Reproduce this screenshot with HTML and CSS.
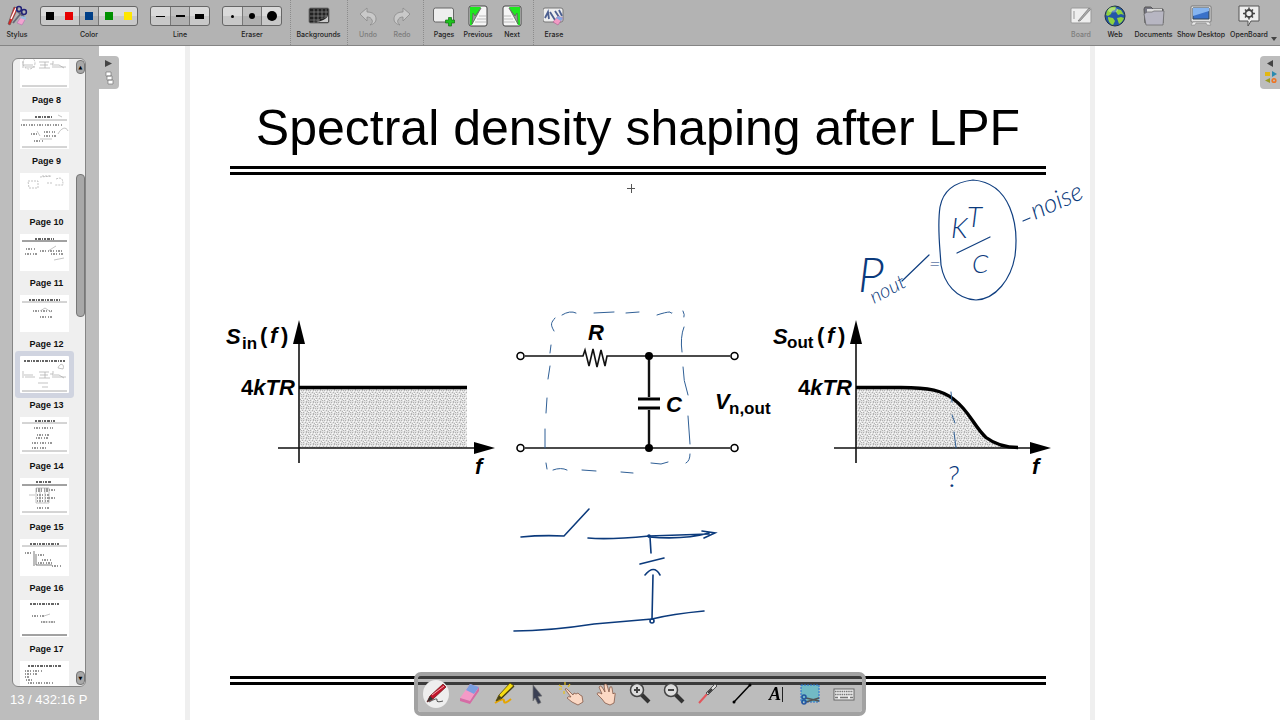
FILE: index.html
```
<!DOCTYPE html>
<html lang="en">
<head>
    <meta charset="UTF-8">
    <title>OpenBoard</title>
    <link rel="stylesheet" href="styles.css">
</head>
<body>

<header class="toolbar">
    <div class="group first">
        <button class="tool">
            <svg width="22" height="22" viewBox="0 0 22 22"><path d="M2 19L8 2l4 1-8 17z" fill="#d22" stroke="#555" stroke-width=".6"/><path d="M5 14L10 3" stroke="#fff" stroke-width="1.4"/><path d="M7 18L16 7M18 12L10 5" stroke="#667" stroke-width="1.8"/><circle cx="13" cy="4" r="2.400" fill="none" stroke="#227" stroke-width="1.500"/><circle cx="18" cy="7" r="2.400" fill="none" stroke="#227" stroke-width="1.500"/><path d="M11 18l4-6 5 1-4 7z" fill="#f2a3cf" stroke="#a6a" stroke-width=".5"/><path d="M14 13l2-2 4 1v3z" fill="#9bd"/></svg>
            <span>Stylus</span>
        </button>
    </div>
    <div class="field">
        <div class="segments colors">
            <button aria-label="Black"><i class="swatch black"></i></button>
            <button aria-label="Red"><i class="swatch red"></i></button>
            <button aria-label="Blue" class="on"><i class="swatch blue"></i></button>
            <button aria-label="Green"><i class="swatch green"></i></button>
            <button aria-label="Yellow"><i class="swatch yellow"></i></button>
        </div>
        <span>Color</span>
    </div>
    <div class="field">
        <div class="segments">
            <button aria-label="Fine line"><i class="line thin"></i></button>
            <button aria-label="Medium line" class="on"><i class="line medium"></i></button>
            <button aria-label="Strong line"><i class="line thick"></i></button>
        </div>
        <span>Line</span>
    </div>
    <div class="field last">
        <div class="segments">
            <button aria-label="Small eraser"><i class="dot small"></i></button>
            <button aria-label="Medium eraser" class="on"><i class="dot mid"></i></button>
            <button aria-label="Large eraser"><i class="dot large"></i></button>
        </div>
        <span>Eraser</span>
    </div>
    <div class="group">
        <button class="tool wide">
            <svg width="22" height="22" viewBox="0 0 22 22"><rect x="1" y="3" width="20" height="15" rx="1.500" fill="#222" stroke="#777"/><path d="M2 7h18M2 11h18M2 15h10M6 4v14M10 4v14M14 4v10M18 4v8" stroke="#888" stroke-width=".7"/><path d="M5 17c7 0 12-2 15-6v6z" fill="#ccc"/><path d="M5 17c5-1 7-2 8-4 2 1 5 0 7-2" fill="#666"/></svg>
            <span>Backgrounds</span>
        </button>
    </div>
    <div class="group">
        <button class="tool" disabled>
            <svg width="22" height="22" viewBox="0 0 22 22"><path d="M3 9l7-6v4c6 0 9 3 9 7 0 3-2 5-6 6 2-2 3-3 2-5-1-2-2-3-5-3v4z" fill="#c9c9c9" stroke="#8a8a8a" stroke-width=".8"/></svg>
            <span>Undo</span>
        </button>
        <button class="tool" disabled>
            <svg width="22" height="22" viewBox="0 0 22 22"><path d="M19 9l-7-6v4c-6 0-9 3-9 7 0 3 2 5 6 6-2-2-3-3-2-5 1-2 2-3 5-3v4z" fill="#c9c9c9" stroke="#8a8a8a" stroke-width=".8"/></svg>
            <span>Redo</span>
        </button>
    </div>
    <div class="group">
        <button class="tool">
            <svg width="22" height="22" viewBox="0 0 22 22"><rect x=".5" y="3" width="20" height="14" rx="2" fill="#eee" stroke="#666"/><path d="M15.500 12.500h3v2.500h3v3h-3v3h-3v-3h-3v-3h3z" fill="#1cc31c" stroke="#176b17" stroke-width=".7"/></svg>
            <span>Pages</span>
        </button>
        <button class="tool">
            <svg width="22" height="22" viewBox="0 0 22 22"><rect x="2" y="1" width="18" height="20" rx="2" fill="#f5f5f5" stroke="#444"/><path d="M3 2h11L5 20H3z" fill="#1ee81e"/><path d="M14 3L5 19 6 8l2 3z" fill="#999" stroke="#555" stroke-width=".6"/><path d="M12 11h7M10 14h9M8 17h11" stroke="#bbb"/></svg>
            <span>Previous</span>
        </button>
        <button class="tool">
            <svg width="22" height="22" viewBox="0 0 22 22"><rect x="2" y="1" width="18" height="20" rx="2" fill="#f5f5f5" stroke="#444"/><path d="M19 2H8l9 18h2z" fill="#1ee81e"/><path d="M8 3l9 16-1-11-2 3z" fill="#999" stroke="#555" stroke-width=".6"/><path d="M3 11h7M3 14h9M3 17h11" stroke="#bbb"/></svg>
            <span>Next</span>
        </button>
    </div>
    <div class="group">
        <button class="tool">
            <svg width="22" height="22" viewBox="0 0 22 22"><rect x="0" y="3" width="20" height="14" rx="2" fill="#eee" stroke="#777"/><path d="M2 13l3-6 1 7M7 7l5 8M12 6l4 6M16 5l3 6" stroke="#4c5f90" stroke-width="1.800" fill="none"/><path d="M10 17l5-6 5 2-5 7z" fill="#f29ac4" stroke="#a0568a" stroke-width=".5"/><path d="M13 13l2-2 5 2-2 3z" fill="#86a7e0"/></svg>
            <span>Erase</span>
        </button>
    </div>
    <nav class="group modes">
        <button class="tool" disabled>
            <svg width="22" height="22" viewBox="0 0 22 22"><rect x="1" y="3" width="20" height="15" rx="1" fill="#eee" stroke="#999"/><path d="M4 6v8" stroke="#999"/><path d="M8 16L19 3l1.500 1.500L10 16z" fill="#aaa" stroke="#777" stroke-width=".7"/></svg>
            <span>Board</span>
        </button>
        <button class="tool">
            <svg width="22" height="22" viewBox="0 0 22 22"><circle cx="11" cy="11" r="10" fill="#2456a8" stroke="#234"/><path d="M3 6c2-4 6-5 9-4l-1 3-3 1-1 3-3 2-2-1zM13 4l4 1 3 5-3-1-3 1-2-3zM4 12l5 1 2 3-2 4c-3-1-5-4-5-8zM13 13l4-1 3 1c-1 3-3 5-5 6l-1-3z" fill="#8fd13f"/><ellipse cx="9" cy="5" rx="5" ry="2.500" fill="#fff" opacity=".3"/></svg>
            <span>Web</span>
        </button>
        <button class="tool docs">
            <svg width="22" height="22" viewBox="0 0 22 22"><path d="M1 4l1-2h6l2 2h10v14H2z" fill="#777783" stroke="#555"/><path d="M4 4h15v6H4z" fill="#ddd"/><path d="M1 9l3-2h5l2-1h10l-1 14H3z" fill="#b7b6c2" stroke="#666" stroke-width=".7"/></svg>
            <span>Documents</span>
        </button>
        <button class="tool desk">
            <svg width="22" height="22" viewBox="0 0 22 22"><rect x="1" y="1" width="20" height="16" rx="1" fill="#e2e2e2" stroke="#666" stroke-width=".8"/><path d="M3 3h16v11H3z" fill="#3971c9" stroke="#345"/><path d="M3 3h16v3L3 11z" fill="#85b4ef"/><path d="M1 20l2-3h16l2 3h-4l-1-2H6l-1 2z" fill="#eee" stroke="#888" stroke-width=".6"/></svg>
            <span>Show Desktop</span>
        </button>
        <button class="tool menu">
            <svg width="22" height="22" viewBox="0 0 22 22"><path d="M1 1h20v15h-8l-3 5v-5H1z" fill="#eee" stroke="#555"/><circle cx="11" cy="8.500" r="3.500" fill="none" stroke="#444" stroke-width="1.800"/><path d="M11 2.500v3M11 11.500v3M5 8.500h3M14 8.500h3M7 4.500l2 2M13 10.500l2 2M15 4.500l-2 2M9 10.500l-2 2" stroke="#444" stroke-width="1.500"/></svg>
            <span>OpenBoard</span>
        </button>
        <i class="more"></i>
    </nav>
</header>

<main class="board">
    <aside class="sidebar">
        <div class="panel">
            <ol class="pages">
                <li><svg class="thumb" viewBox="0 0 49 37"><use href="#mini-circuit" y="-5"/><circle cx="9" cy="12" r="6" stroke-dasharray="2 1"/><path class="rule" d="M2 35h45"/></svg>Page 8</li>
                <li><svg class="thumb" viewBox="0 0 49 37"><path class="head" d="M15 5h17"/><path class="rule" d="M2 8h45M2 35h45"/><path class="text" d="M1 13h42M11 22h6M24 20h11M24 24h12M14 29h9"/><path d="M17 19l3 5M38 22c3-6 8-8 10-3M20 27h12M38 3l4 2"/></svg>Page 9</li>
                <li><svg class="thumb" viewBox="0 0 49 37"><path d="M8 8h10v7H9zM22 3h9M27 10h5M36 6c5-2 7-1 7 6h-8M20 4l12-1" stroke-dasharray="2 1"/></svg>Page 10</li>
                <li><svg class="thumb" viewBox="0 0 49 37"><path class="head" d="M15 5h19"/><path class="rule dark" d="M2 7h45"/><path class="text" d="M6 15h10M20 17h22M5 20h12M31 20h12"/><path d="M28 17l8-5M34 26l10-2"/></svg>Page 11</li>
                <li><svg class="thumb" viewBox="0 0 49 37"><path class="head" d="M9 5h31"/><path class="rule" d="M2 7h45"/><path class="text" d="M13 16h19M20 22h12"/><path d="M20 16l5-3 6 4"/></svg>Page 12</li>
                <li class="current"><svg class="thumb" viewBox="0 0 49 37"><path class="head" d="M4 5h41"/><use href="#mini-circuit"/><path d="M38 12c2-6 7-4 5 1zM18 27h10M22 31h6"/><path class="rule" d="M2 35h45"/></svg>Page 13</li>
                <li><svg class="thumb" viewBox="0 0 49 37"><path class="head" d="M15 4h20"/><path class="rule" d="M2 6h45M2 34h45"/><path class="text" d="M14 11h19M17 18h12M16 21h12M12 26h21M12 31h14"/></svg>Page 14</li>
                <li><svg class="thumb" viewBox="0 0 49 37"><path class="head" d="M16 4h16"/><path class="rule dark" d="M2 7h45"/><path class="text" d="M16 11h13M16 13h13M17 17h12M17 20h12M17 23h12M29 12h8M29 20h6M17 30h12"/><path d="M9 17h6M16 10v15h13V10zM20 10v15M25 10v15"/><path class="rule" d="M2 34h45"/></svg>Page 15</li>
                <li><svg class="thumb" viewBox="0 0 49 37"><path class="head" d="M10 5h30"/><path class="rule" d="M2 7h45"/><path class="text" d="M5 14h6M18 16h7M22 21h9M18 24h14M32 27h10"/><path class="dark" d="M14 12v15M16 15v11h16"/></svg>Page 16</li>
                <li><svg class="thumb" viewBox="0 0 49 37"><path class="head" d="M10 4h30"/><path class="text" d="M12 16h12M21 22h14"/><path d="M24 16l6-2M22 22h13"/><path class="rule dark" d="M2 35h45"/></svg>Page 17</li>
                <li><svg class="thumb" viewBox="0 0 49 37"><path class="head" d="M8 5h34"/><path class="text" d="M5 10h17M5 13h13M5 16h5M6 19h8M8 22h26"/></svg></li>
            </ol>
            <div class="scroll">
                <button aria-label="Scroll up">▲</button>
                <i class="handle"></i>
                <button aria-label="Scroll down">▼</button>
            </div>
        </div>
        <div class="status"><span>13 / 43</span><span>2:16 P</span></div>
    </aside>

    <section class="slide">
        <h1>Spectral density shaping after LPF</h1>
        <hr>
        <svg class="drawing" viewBox="190 175 900 501">
            <defs>
                <pattern id="grain" width="7" height="6" patternUnits="userSpaceOnUse">
                    <rect width="7" height="6" fill="#e2e2e2"/>
                    <path d="M0 .5h1M2 .5h1M5 .5h1M1 2.500h1M4 2.500h1M6 3.500h1M2 4.500h1M5 5.500h1M0 4.500h1" stroke="#b2b2b2"/>
                    <path d="M3 1.500h1M0 3.500h2M4 4.500h1M6 1.500h1" stroke="#fafafa"/>
                </pattern>
                <g id="mini-circuit">
                    <path d="M3 15v7M4 19h9M19 16h10M19 22h11M25 16v6M33 15v7M34 19l5 0 5 3M30 18h3"/>
                    <path class="text" d="M5 21h10M20 19h8M34 21h12"/>
                </g>
            </defs>

            <!-- input spectrum -->
            <rect x="300" y="388" width="167" height="60" fill="url(#grain)"/>
            <path class="axis" d="M299 335v128M278 448h205"/>
            <path d="M299 320l6 24h-12zM495 448l-21 6v-12z"/>
            <path class="curve" d="M299 387.500h168"/>
            <text class="math" x="226" y="344">S<tspan class="sub" x="242" y="349">in</tspan><tspan class="paren" x="260" y="343">(</tspan><tspan x="270" y="343">f</tspan><tspan class="paren" x="281" y="343">)</tspan></text>
            <text class="math" x="241" y="395"><tspan class="upright">4</tspan>kTR</text>
            <text class="math" x="475" y="474">f</text>

            <!-- RC filter -->
            <path class="wire" d="M525 356h58l2-6 4 16 4-17 4 18 4-17 4 16 2-10h123M525 448h205"/>
            <path class="wire bold" d="M649 356v41M649 410v38"/>
            <path class="plate" d="M638 399h22M638 408h22"/>
            <circle cx="649" cy="356" r="4"/>
            <circle cx="649" cy="448" r="4"/>
            <g class="terminal">
                <circle cx="520.500" cy="356" r="3.500"/>
                <circle cx="734.500" cy="356" r="3.500"/>
                <circle cx="520.500" cy="448" r="3.500"/>
                <circle cx="734.500" cy="448" r="3.500"/>
            </g>
            <text class="math" x="588" y="340">R</text>
            <text class="math" x="666" y="412">C</text>
            <text class="math" x="715" y="409">V<tspan class="sub" x="729" y="414">n,out</tspan></text>

            <!-- output spectrum -->
            <path d="M856 388h45c28 0 42 3 53 12 15 11 20 27 32 38 8 6 20 10 32 10H856z" fill="url(#grain)"/>
            <path class="axis" d="M856 335v128M834 448h205"/>
            <path d="M856 320l6 24h-12zM1051 448l-21 6v-12z"/>
            <path class="curve" d="M856 387.500h45c28 0 42 3 53 12 15 11 20 27 32 38 8 6 20 10 32 10"/>
            <text class="math" x="773" y="344">S<tspan class="sub" x="787" y="348">out</tspan><tspan class="paren" x="817" y="343">(</tspan><tspan x="827" y="343">f</tspan><tspan class="paren" x="838" y="343">)</tspan></text>
            <text class="math" x="798" y="395"><tspan class="upright">4</tspan>kTR</text>
            <text class="math" x="1032" y="474">f</text>

            <!-- pen notes -->
            <g class="ink">
                <path d="M554 331c-4-7-3-8 1-13M562 315q8-5 14-2M594 313l20-1M626 313l13-1M657 315q9-3 13-3 1 2 2 1M683 311q2 4 1 6M684 327q-4 10-2 25M551 345l-1 8M550 366l-2 13M547 398l-1 15M545 429v19M546 463l1 6M553 470q8-3 14 0M582 470l14 1M621 472l12 1M651 463l10 1 7-2M683 367q0 13 5 28M688 416l2 28M690 454q0 7-4 9"/>
                <path d="M951 392l1 10M952 415l3 8M954 432l2 16"/>
                <path class="oval" d="M973 180c-18 2-30 11-33 27-3 20 0 40 1 58 3 18 15 34 35 35 20-1 35-21 39-44 4-31-4-73-42-76zM957 253l33-16M902 281l27-26M1023 221l7-3"/>
            </g>
            <g class="ink strong">
                <path d="M521 537q20-2 43-1l25-27M588 538q20 2 61-2l60-2M649 537q35 3 60-4M702 531l13 2-11 5M650 537l1 16M640 564l24-6M645 575q9-11 15 0M653 575l-1 44M514 631q35 0 80-7l58-5q20-5 52-8"/>
                <circle cx="652" cy="621" r="2"/>
                <circle cx="649" cy="536" r="1"/>
            </g>
            <g class="hand">
                <text x="858" y="292" font-size="48">P</text>
                <text transform="translate(874 304) rotate(-28)" font-size="20">nout</text>
                <text x="929" y="271" font-size="20">=</text>
                <text x="951" y="238" font-size="28">K</text>
                <text x="967" y="227" font-size="28">T</text>
                <text x="972" y="273" font-size="26">C</text>
                <text transform="translate(1035 220) rotate(-24)" font-size="26">noise</text>
                <text x="947" y="487" font-size="30">?</text>
            </g>
            <path class="cursor" d="M627 188.500h8M631.500 184v9"/>
        </svg>
        <hr>
    </section>

    <button class="tab left" aria-label="Page navigator">
        <svg width="18" height="30" viewBox="0 0 18 30"><path d="M5 4l7 3.500L5 11z" fill="#444"/><path d="M6 16h5v4H6zM7 20h5v4H7zM8 24h5v4H8z" fill="#fff" stroke="#777" stroke-width=".7"/></svg>
    </button>
    <button class="tab right" aria-label="Library">
        <svg width="18" height="30" viewBox="0 0 18 30"><path d="M12 4L6 7.500 12 11z" fill="#444"/><path d="M4 16h5v4H4z" fill="#e2b713"/><path d="M11 15l5 3-5 3z" fill="#2a8ab0"/><path d="M9 22l-5 2.500L9 27z" fill="#9a9a20"/><circle cx="13" cy="24.500" r="1.800" fill="none" stroke="#ee7424" stroke-width="1.600"/></svg>
    </button>
</main>

<div class="palette">
    <button class="on" aria-label="Pen"><svg width="24" height="24" viewBox="0 0 24 24"><path d="M5 20q9-5 8-2t6 1" fill="none" stroke="#555"/><path d="M3 20l3-6L19 2l3 3L9 17z" fill="#c2142b" stroke="#611" stroke-width=".7"/><path d="M8 13L20 4" stroke="#f5a7b0"/><path d="M3 20l3-6 3 3z" fill="#333"/></svg></button>
    <button aria-label="Eraser"><svg width="24" height="24" viewBox="0 0 24 24"><path d="M2 16L12 2l9 3-9 14z" fill="#f49ac7"/><path d="M8 8l4-6 9 3-5 7z" fill="#7b9fe0"/><path d="M2 16l10 3v3L2 19zM12 19l9-14v4l-9 13z" fill="#d66ba5"/></svg></button>
    <button aria-label="Highlighter"><svg width="24" height="24" viewBox="0 0 24 24"><path d="M3 21q9-6 9-2t7-2" fill="none" stroke="#e6a500" stroke-width="2"/><path d="M4 19l3-6L18 1l4 3L9 17z" fill="#f6dc10" stroke="#554800" stroke-width=".8"/><path d="M4 19l3-6 3 3z" fill="#4a4215"/><path d="M9 16.500L22 4" stroke="#4a4215" stroke-width="1.500"/></svg></button>
    <button aria-label="Select"><svg width="24" height="24" viewBox="0 0 24 24"><path d="M7 3l9 11-4 .5 3 6-3 1.500-3-6-2 3z" fill="#3b4054" stroke="#777" stroke-width=".7"/></svg></button>
    <button aria-label="Interact"><svg width="24" height="24" viewBox="0 0 24 24"><path d="M2 5l-3-2M5 3V0M2 7h-3M8 5l2-3M4 9v3" stroke="#e6c01a" stroke-width="1.200"/><path d="M5 7q2-1 3 1l5 5 1-2 2 1 2-1 2 2 2 1 1 6-5 3-6-3-5-4q1-2 4-1z" fill="#fbd8c4" stroke="#7a4b38" stroke-width=".7"/></svg></button>
    <button aria-label="Hand"><svg width="24" height="24" viewBox="0 0 24 24"><path d="M8 17l-5-5q0-2 3-1l2 1-3-7q1-2 3 0l3 5-1-7q2-2 3 0l2 7 1-5q2-1 2 1l1 6 1-1q2 0 1 2l-1 8-4 2-5-2z" fill="#fbd8c4" stroke="#7a4b38" stroke-width=".7"/></svg></button>
    <button aria-label="Zoom in"><svg width="24" height="24" viewBox="0 0 24 24"><path d="M13 12l8 8" stroke="#333" stroke-width="4"/><circle cx="9" cy="8" r="6.500" fill="#ddd" stroke="#444" stroke-width="1.500"/><path d="M6 8h6M9 5v6" stroke="#444" stroke-width="2"/></svg></button>
    <button aria-label="Zoom out"><svg width="24" height="24" viewBox="0 0 24 24"><path d="M13 12l8 8" stroke="#333" stroke-width="4"/><circle cx="9" cy="8" r="6.500" fill="#ddd" stroke="#444" stroke-width="1.500"/><path d="M6 8h6" stroke="#444" stroke-width="2"/></svg></button>
    <button aria-label="Laser pointer"><svg width="24" height="24" viewBox="0 0 24 24"><path d="M3 21l9-10" stroke="#e3555b" stroke-width="2"/><path d="M10 11l9-9 2 2-9 9z" fill="#ddd" stroke="#555"/><path d="M12 11l4-4" stroke="#333" stroke-width="2"/></svg></button>
    <button aria-label="Line"><svg width="24" height="24" viewBox="0 0 24 24"><path d="M4 20L20 3" stroke="#000" stroke-width="1.500"/><circle cx="4" cy="20" r="1.500"/><circle cx="20" cy="3" r="1.500"/></svg></button>
    <button class="letter" aria-label="Text">A<i></i></button>
    <button aria-label="Capture"><svg width="24" height="24" viewBox="0 0 24 24"><rect x="3" y="3" width="18" height="17" fill="#72bac5" stroke="#266fd0" stroke-dasharray="2 1"/><path d="M8 16l13 3M8 20l13-4" stroke="#555" stroke-width="1.500"/><circle cx="6" cy="15" r="2" fill="none" stroke="#24569f" stroke-width="1.500"/><circle cx="6" cy="20" r="2" fill="none" stroke="#24569f" stroke-width="1.500"/></svg></button>
    <button aria-label="Keyboard"><svg width="24" height="24" viewBox="0 0 24 24"><rect x="2" y="7" width="20" height="11" fill="#eee" stroke="#666"/><path d="M3 9.500h18M3 12.500h18" stroke="#777" stroke-width="1.500" stroke-dasharray="1.500 .7"/><path d="M3 15.500h3M8 15.500h8M18 15.500h3" stroke="#777" stroke-width="1.500"/></svg></button>
</div>

</body>
</html>
```
FILE: styles.css
```
* {
    box-sizing: border-box;
}
body {
    margin: 0;
    height: 100vh;
    display: flex;
    flex-direction: column;
    overflow: hidden;
    background: #fff;
    font-family: Inter, "Liberation Sans", sans-serif;
}
button {
    border: none;
    padding: 0;
    background: none;
    font: inherit;
    color: inherit;
    cursor: pointer;
}

/* top toolbar */
.toolbar {
    display: flex;
    flex: none;
    height: 46px;
    background: #b3b3b3;
    border-bottom: 1px solid #858585;
    font-size: 7px;
    font-weight: 500;
    line-height: 10px;
    color: #222;
    white-space: nowrap;
}
.group {
    display: flex;
    padding: 0 4px 0 3px;
    border-left: 1px dotted #8c8c8c;
}
.group.first {
    padding: 0 6px 0 0;
    border: none;
}
.modes {
    margin-left: auto;
    padding: 0 3px 0 0;
    border: none;
}
.tool {
    display: flex;
    flex-direction: column;
    align-items: center;
    width: 34px;
    padding-top: 5px;
    gap: 3px;
}
.tool:disabled {
    color: #7c7c7c;
}
.tool.wide {
    width: 49px;
}
.tool.docs {
    width: 43px;
}
.tool.desk {
    width: 52px;
}
.tool.menu {
    width: 44px;
}
.more {
    align-self: flex-end;
    margin-bottom: 4px;
    border: 3px solid transparent;
    border-top: 4px solid #444;
    border-bottom: none;
}
.field {
    display: flex;
    flex-direction: column;
    align-items: center;
    padding-top: 6px;
    gap: 4px;
    margin-right: 12px;
}
.field.last {
    margin-right: 8px;
}
.segments {
    display: flex;
    width: 60px;
    height: 20px;
    border: 1px solid #666;
    border-radius: 3px;
    background: linear-gradient(#dadada 50%, #c8c8c8 50%);
}
.segments.colors {
    width: 98px;
}
.segments button {
    flex: 1;
    display: flex;
    align-items: center;
    justify-content: center;
}
.segments .on {
    background: linear-gradient(#c0c0c0 50%, #b0b0b0 50%);
    border: 1px solid #777;
    border-width: 0 1px;
}
.swatch {
    width: 8px;
    height: 8px;
}
.black {
    background: #000;
}
.red {
    background: #e60000;
}
.blue {
    background: #003f87;
}
.green {
    background: #009000;
}
.yellow {
    background: #ffe600;
}
.line {
    width: 9px;
    background: #000;
}
.thin {
    height: 1px;
}
.medium {
    height: 2px;
}
.thick {
    height: 5px;
}
.dot {
    border-radius: 50%;
    background: #000;
}
.small {
    width: 3px;
    height: 3px;
}
.mid {
    width: 6px;
    height: 6px;
}
.large {
    width: 10px;
    height: 10px;
}

/* board */
.board {
    position: relative;
    flex: 1;
    min-height: 0;
    display: grid;
    grid-template-columns: 99px 1fr 99px;
    grid-template-rows: 100%;
}
.sidebar {
    display: flex;
    flex-direction: column;
    padding: 12px 12px 8px;
    background: #bdbdbd;
}
.panel {
    flex: 1;
    min-height: 0;
    display: flex;
    justify-content: space-between;
    width: 74px;
    overflow: hidden;
    border: 1px solid #858585;
    border-radius: 6px;
    background: #efefef;
}
.pages {
    margin: -8px 0 0;
    padding: 0;
    width: 62px;
    list-style: none;
    font: bold 9px/24px "Liberation Sans", sans-serif;
    text-align: center;
    color: #111;
}
.pages li {
    height: 61px;
    padding-left: 5px;
}
.thumb {
    display: block;
    width: 49px;
    height: 37px;
    margin-left: 2px;
    background: #fff;
    fill: none;
    stroke: #aaa;
    stroke-width: .7;
}
.current .thumb {
    border-radius: 1px;
    box-shadow: 0 0 0 5px #d0d4e0;
}
.thumb .head {
    stroke: #333;
    stroke-width: 1.5;
    stroke-dasharray: 2 1 3 1 1 1;
}
.thumb .rule {
    stroke: #aaa;
    stroke-width: 1;
}
.thumb .text {
    stroke: #777;
    stroke-width: 1.5;
    stroke-dasharray: 1 1 2 1 1 2;
}
.thumb .dark {
    stroke: #444;
}
.scroll {
    display: flex;
    flex-direction: column;
    justify-content: space-between;
    width: 9px;
    padding: 1px 0;
}
.scroll button {
    height: 14px;
    border: 1px solid #777;
    border-radius: 4px;
    background: #a8a8a8;
    font: 5px/12px "DejaVu Sans", sans-serif;
}
.handle {
    height: 143px;
    margin-bottom: 254px;
    border: 1px solid #777;
    border-radius: 4px;
    background: #a8a8a8;
}
.status {
    display: flex;
    height: 25px;
    margin-left: -2px;
    font: 13px/25px "Liberation Sans", sans-serif;
    color: #fff;
    white-space: nowrap;
}

.slide {
    justify-self: center;
    width: 100%;
    max-width: 910px;
    overflow: hidden;
    border: 5px solid #efefef;
    border-width: 0 5px;
}
.slide h1 {
    margin: 0;
    padding: 44px 4px 0 0;
    height: 120px;
    font: 50px/76px "Liberation Sans", sans-serif;
    text-align: center;
    white-space: nowrap;
}
.slide hr {
    margin: 0 44px 0 40px;
    border: none;
    border-top: 9px double #000;
}
.drawing {
    display: block;
    width: 100%;
}
.axis,
.wire {
    fill: none;
    stroke: #111;
    stroke-width: 1.6;
}
.wire.bold {
    stroke-width: 2.4;
}
.curve {
    fill: none;
    stroke: #000;
    stroke-width: 3.4;
}
.plate {
    stroke: #000;
    stroke-width: 3;
}
.terminal {
    fill: #fff;
    stroke: #000;
    stroke-width: 1.6;
}
.math {
    font: italic bold 22px "Liberation Sans", sans-serif;
}
.math .sub {
    font-size: 17px;
    font-style: normal;
}
.math .paren {
    font-style: normal;
}
.math .upright {
    font-style: normal;
}
.ink {
    fill: none;
    stroke: #2f5f96;
    stroke-width: 1;
    stroke-linecap: round;
}
.ink .oval {
    stroke: #103f80;
    stroke-width: 1.2;
}
.ink.strong {
    stroke: #0b3a7c;
    stroke-width: 1.6;
}
.hand {
    fill: #0b3a7c;
    font-family: Lato, "Liberation Sans", sans-serif;
    font-style: italic;
    font-weight: 300;
}
.cursor {
    stroke: #555;
}

.tab {
    position: absolute;
    top: 10px;
    width: 20px;
    height: 33px;
    background: #bdbdbd;
}
.tab.left {
    left: 99px;
    border-radius: 0 4px 4px 0;
}
.tab.right {
    right: 0;
    border-radius: 4px 0 0 4px;
}

/* stylus palette */
.palette {
    position: fixed;
    bottom: 4px;
    left: 50%;
    transform: translateX(-50%);
    display: flex;
    gap: 8px;
    padding: 4px 5px;
    border: 4px solid #a2a2a2;
    border-radius: 7px;
    background: rgba(118, 118, 118, .49);
    background-clip: padding-box;
}
.palette button {
    display: flex;
    align-items: center;
    justify-content: center;
    width: 26px;
    height: 28px;
}
.palette svg {
    overflow: visible;
}
.palette .on {
    border-radius: 50%;
    background: #eee;
}
.palette .letter {
    font: italic bold 18px "Liberation Serif", serif;
}
.letter i {
    width: 1px;
    height: 15px;
    margin-left: 1px;
    background: #222;
}
```
